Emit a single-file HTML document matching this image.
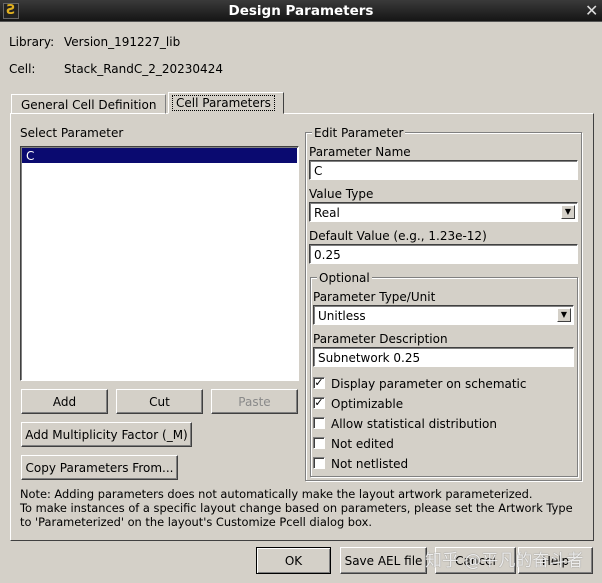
<!DOCTYPE html>
<html><head><meta charset="utf-8"><style>
*{box-sizing:border-box;margin:0;padding:0}
body{width:602px;height:583px;background:#d4d0c8;font-family:"DejaVu Sans","Noto Sans CJK SC",sans-serif;font-size:12px;color:#000;position:relative;overflow:hidden}
.a{position:absolute;white-space:nowrap}
.t{margin-top:1px}
.title{left:0;top:0;width:602px;height:22px;background:linear-gradient(#3a3a3a,#151515);border-bottom:1px solid #555}
.btn{position:absolute;background:#d4d0c8;border:1px solid;border-color:#fff #404040 #404040 #fff;box-shadow:inset -1px -1px 0 #808080;text-align:center;font-size:12px;padding-top:1px}
.in{position:absolute;background:#fff;border:1px solid;border-color:#404040 #fff #fff #404040;box-shadow:inset 1px 1px 0 #808080;padding-left:4px;padding-top:1px;font-size:12px}
.grp{position:absolute;border:1px solid #808080;box-shadow:1px 1px 0 #fff,inset 1px 1px 0 #fff}
.lg{position:absolute;background:#d4d0c8;padding:0 2px;margin-top:1px}
.cb{position:absolute;width:12px;height:12px;background:#fff;border:1px solid;border-color:#808080 #fff #fff #808080;box-shadow:inset 1px 1px 0 #404040;font-size:11px;line-height:10px;text-align:center;font-weight:bold}
.dd{position:absolute;right:2px;top:2px;width:14px;height:14px;background:#d4d0c8;border:1px solid;border-color:#fff #404040 #404040 #fff;font-size:8px;line-height:12px;text-align:center}
</style></head><body>
<div class="a title"></div>
<div class="a" style="left:3px;top:3px;width:16px;height:16px;background:#222;border:1px solid #666;color:#e0b020;font-weight:bold;font-size:13px;line-height:14px;text-align:center">Ƨ</div>
<div class="a" style="left:0;width:602px;top:3px;text-align:center;color:#fff;font-weight:bold;font-size:13.5px">Design Parameters</div>
<div class="a" style="left:585px;top:1px;color:#ddd;font-weight:bold;font-size:16px">✕</div>

<div class="a t" style="left:9px;top:34px">Library:</div>
<div class="a t" style="left:64px;top:34px">Version_191227_lib</div>
<div class="a t" style="left:9px;top:61px">Cell:</div>
<div class="a t" style="left:64px;top:61px">Stack_RandC_2_20230424</div>

<div class="a" style="left:10px;top:113px;width:584px;height:428px;border:1px solid;border-color:#fff #404040 #404040 #fff"></div>
<div class="a" style="left:11px;top:94px;width:155px;height:20px;border:1px solid;border-color:#fff #808080 transparent #fff;padding:3px 0 0 9px">General Cell Definition</div>
<div class="a" style="left:168px;top:92px;width:116px;height:22px;border:1px solid;border-color:#fff #404040 transparent #fff;background:#d4d0c8;padding:3px 0 0 3px"><span style="border:1px dotted #000;padding:0 3px">Cell Parameters</span></div>

<div class="a t" style="left:20px;top:125px">Select Parameter</div>
<div class="in" style="left:20px;top:146px;width:279px;height:235px;padding:0">
<div style="background:#0a0a70;color:#fff;height:15px;margin:1px;padding-left:4px;line-height:16px">C</div></div>
<div class="btn" style="left:21px;top:389px;width:87px;height:25px;line-height:23px">Add</div>
<div class="btn" style="left:116px;top:389px;width:87px;height:25px;line-height:23px">Cut</div>
<div class="btn" style="left:211px;top:389px;width:87px;height:25px;line-height:23px;color:#8a8a8a">Paste</div>
<div class="btn" style="left:21px;top:422px;width:171px;height:25px;line-height:23px">Add Multiplicity Factor (_M)</div>
<div class="btn" style="left:21px;top:455px;width:157px;height:25px;line-height:23px">Copy Parameters From...</div>

<div class="grp" style="left:305px;top:132px;width:277px;height:349px"></div>
<div class="lg" style="left:312px;top:125px">Edit Parameter</div>
<div class="a t" style="left:309px;top:144px">Parameter Name</div>
<div class="in" style="left:309px;top:160px;width:269px;height:20px;line-height:18px">C</div>
<div class="a t" style="left:309px;top:186px">Value Type</div>
<div class="in" style="left:309px;top:202px;width:269px;height:20px;line-height:18px">Real<div class="dd">▼</div></div>
<div class="a t" style="left:309px;top:228px">Default Value (e.g., 1.23e-12)</div>
<div class="in" style="left:309px;top:244px;width:269px;height:20px;line-height:18px">0.25</div>

<div class="grp" style="left:310px;top:277px;width:268px;height:200px"></div>
<div class="lg" style="left:317px;top:270px">Optional</div>
<div class="a t" style="left:313px;top:289px">Parameter Type/Unit</div>
<div class="in" style="left:313px;top:305px;width:261px;height:20px;line-height:18px">Unitless<div class="dd">▼</div></div>
<div class="a t" style="left:313px;top:331px">Parameter Description</div>
<div class="in" style="left:313px;top:347px;width:261px;height:20px;line-height:18px">Subnetwork 0.25</div>
<div class="cb" style="left:313px;top:377px">✓</div><div class="a t" style="left:331px;top:376px">Display parameter on schematic</div>
<div class="cb" style="left:313px;top:397px">✓</div><div class="a t" style="left:331px;top:396px">Optimizable</div>
<div class="cb" style="left:313px;top:417px"></div><div class="a t" style="left:331px;top:416px">Allow statistical distribution</div>
<div class="cb" style="left:313px;top:437px"></div><div class="a t" style="left:331px;top:436px">Not edited</div>
<div class="cb" style="left:313px;top:457px"></div><div class="a t" style="left:331px;top:456px">Not netlisted</div>

<div class="a" style="left:20px;top:487px;font-size:11.4px;line-height:14px">Note: Adding parameters does not automatically make the layout artwork parameterized.<br>To make instances of a specific layout change based on parameters, please set the Artwork Type<br>to 'Parameterized' on the layout's Customize Pcell dialog box.</div>

<div class="btn" style="left:256px;top:547px;width:75px;height:27px;line-height:25px;border-color:#000;box-shadow:inset 1px 1px 0 #fff,inset -1px -1px 0 #808080">OK</div>
<div class="btn" style="left:340px;top:547px;width:87px;height:27px;line-height:25px">Save AEL file</div>
<div class="btn" style="left:435px;top:547px;width:81px;height:27px;line-height:25px">Cancel</div>
<div class="btn" style="left:518px;top:547px;width:75px;height:27px;line-height:25px">Help</div>
<div class="a" style="left:425px;top:546px;font-size:17px;color:rgba(255,255,255,0.85);text-shadow:0 0 1px #666">知乎 @平凡的奋斗者</div>
</body></html>
